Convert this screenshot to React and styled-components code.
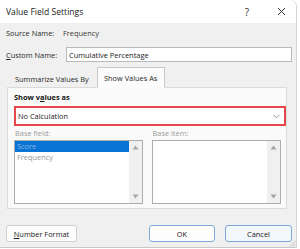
import React from "react";
import styled, { createGlobalStyle } from "styled-components";

const Global = createGlobalStyle`
  html, body { margin: 0; padding: 0; background: #ffffff; }
  body { font-family: "Open Sans", "Noto Sans", sans-serif; color: #1a1a1a; }
  * { box-sizing: border-box; }
`;

const Window = styled.div`
  width: 297px;
  height: 248px;
  background: #f0f0f0;
  border-right: 1px solid #d4d4d4;
  border-bottom: 1px solid #c8c8c8;
  border-top-right-radius: 7px;
  display: flex;
  flex-direction: column;
  overflow: hidden;
  position: relative;
`;

const TitleBar = styled.div`
  height: 23px;
  flex: none;
  background: #ffffff;
  display: flex;
  align-items: center;
  padding-left: 6px;
  font-size: 8.6px;
  color: #1a1a1a;
`;

const TitleButton = styled.span`
  width: ${(p) => p.$w}px;
  text-align: center;
  font-size: ${(p) => p.$size}px;
  color: #333;
  margin-left: ${(p) => p.$ml || 0}px;
  display: flex;
  justify-content: center;
`;

const Spacer = styled.div`
  flex: 1;
`;

const Body = styled.div`
  flex: 1;
  display: flex;
  flex-direction: column;
  padding: 0 4px 0 6px;
  font-size: 7.4px;
`;

const Row = styled.div`
  display: flex;
  align-items: center;
  height: ${(p) => p.$h}px;
  margin-top: ${(p) => p.$mt}px;
  flex: none;
`;

const Label = styled.span`
  width: ${(p) => p.$w}px;
  color: #2a2a2a;
  flex: none;
`;

const Value = styled.span`
  color: #3a3a3a;
`;

const Key = styled.span`
  text-decoration: underline;
  text-underline-offset: 1px;
`;

const TextInput = styled.div`
  flex: 1;
  height: 100%;
  background: #fff;
  border: 1px solid #b9b9b9;
  display: flex;
  align-items: center;
  padding-left: 2px;
  color: #1a1a1a;
`;

const TabStrip = styled.div`
  display: flex;
  align-items: flex-end;
  height: 20px;
  margin-top: 6px;
  padding-left: 4px;
  flex: none;
  position: relative;
  z-index: 1;
  margin-bottom: -1px;
`;

const Tab = styled.div`
  height: ${(p) => (p.$active ? 21 : 18)}px;
  padding: 0 ${(p) => (p.$active ? 6 : 4)}px;
  display: flex;
  align-items: center;
  color: #2a2a2a;
  background: ${(p) => (p.$active ? "#fbfbfb" : "transparent")};
  border: 1px solid ${(p) => (p.$active ? "#c9c9c9" : "transparent")};
  border-bottom: 1px solid ${(p) => (p.$active ? "#fbfbfb" : "transparent")};
  margin-top: ${(p) => (p.$active ? 0 : 2)}px;
  width: ${(p) => p.$w}px;
  white-space: nowrap;
`;

const Panel = styled.div`
  margin-left: 1px;
  margin-right: 5px;
  border: 1px solid #dadada;
  background: #fafafa;
  padding: 4px 5px 4px 6px;
  display: flex;
  flex-direction: column;
  flex: none;
`;

const SectionTitle = styled.div`
  font-weight: 700;
  color: #111;
  height: 10px;
  line-height: 10px;
  flex: none;
`;

const Combo = styled.div`
  margin-top: 4px;
  height: 20px;
  width: 272px;
  border: 2px solid #e5484a;
  background: #fff;
  display: flex;
  align-items: center;
  padding: 0 4px 0 2px;
  color: #1a1a1a;
  flex: none;
`;

const Lists = styled.div`
  display: flex;
  gap: 9px;
  flex: none;
`;

const ListGroup = styled.div`
  width: ${(p) => p.$w}px;
  display: flex;
  flex-direction: column;
`;

const ListLabel = styled.div`
  color: #9a9a9a;
  height: 14px;
  display: flex;
  align-items: center;
  padding-left: 1px;
`;

const ListBox = styled.div`
  height: 64px;
  border: 1px solid #adadad;
  background: #fff;
  display: flex;
`;

const Items = styled.div`
  flex: 1;
  display: flex;
  flex-direction: column;
`;

const Item = styled.div`
  height: 11px;
  line-height: 11px;
  padding-left: 2px;
  color: ${(p) => (p.$selected ? "#8ab4de" : "#9a9a9a")};
  background: ${(p) => (p.$selected ? "#0a74d6" : "transparent")};
`;

const ScrollBar = styled.div`
  width: 13px;
  background: #f0f0f0;
  display: flex;
  flex-direction: column;
  justify-content: space-between;
  align-items: center;
  padding: 4px 0;
`;

const Arrow = styled.svg`
  display: block;
`;

const Footer = styled.div`
  display: flex;
  align-items: center;
  margin-top: 16px;
  height: 17px;
  flex: none;
`;

const Button = styled.div`
  width: ${(p) => p.$w}px;
  margin-left: ${(p) => p.$ml || 0}px;
  height: 17px;
  border-radius: 3px;
  border: 1px solid ${(p) => (p.$primary ? "#7fa9d6" : "#cfcfcf")};
  background: ${(p) => (p.$tint ? "#f2f7fc" : "#fdfdfd")};
  display: flex;
  align-items: center;
  justify-content: center;
  color: #1a1a1a;
`;

const Grip = styled.svg`
  position: absolute;
  right: 0;
  bottom: 0;
`;

const UpArrow = () => (
  <Arrow width="7" height="5" viewBox="0 0 7 5">
    <path d="M3.5 0.5 L6.5 4.5 L0.5 4.5 Z" fill="#a6a6a6" />
  </Arrow>
);

const DownArrow = () => (
  <Arrow width="7" height="5" viewBox="0 0 7 5">
    <path d="M0.5 0.5 L6.5 0.5 L3.5 4.5 Z" fill="#a6a6a6" />
  </Arrow>
);

export default function App() {
  return (
    <>
      <Global />
      <Window>
        <TitleBar>
          Value Field Settings
          <Spacer />
          <TitleButton $w={20} $size={10}>?</TitleButton>
          <TitleButton $w={20} $size={12} $ml={14}>
            <svg width="9" height="9" viewBox="0 0 9 9">
              <path d="M1 1 L8 8 M8 1 L1 8" stroke="#333" strokeWidth="1" />
            </svg>
          </TitleButton>
          <Spacer style={{ flex: "none", width: 5 }} />
        </TitleBar>
        <Body>
          <Row $h={10} $mt={5}>
            <Label $w={57}>Source Name:</Label>
            <Value>Frequency</Value>
          </Row>
          <Row $h={15} $mt={9}>
            <Label $w={60}>
              <Key>C</Key>ustom Name:
            </Label>
            <TextInput>Cumulative Percentage</TextInput>
          </Row>
          <TabStrip>
            <Tab $w={87}>Summarize Values By</Tab>
            <Tab $active $w={68}>Show Values As</Tab>
          </TabStrip>
          <Panel>
            <SectionTitle>
              Show v<Key>a</Key>lues as
            </SectionTitle>
            <Combo>
              No Calculation
              <Spacer />
              <svg width="7" height="5" viewBox="0 0 7 5">
                <path d="M0.5 0.8 L3.5 3.8 L6.5 0.8" fill="none" stroke="#8a8a8a" strokeWidth="0.9" />
              </svg>
            </Combo>
            <Lists>
              <ListGroup $w={131}>
                <ListLabel>Base field:</ListLabel>
                <ListBox>
                  <Items>
                    <Item $selected>Score</Item>
                    <Item>Frequency</Item>
                  </Items>
                  <ScrollBar>
                    <UpArrow />
                    <DownArrow />
                  </ScrollBar>
                </ListBox>
              </ListGroup>
              <ListGroup $w={132}>
                <ListLabel>Base item:</ListLabel>
                <ListBox>
                  <Items />
                  <ScrollBar>
                    <UpArrow />
                    <DownArrow />
                  </ScrollBar>
                </ListBox>
              </ListGroup>
            </Lists>
          </Panel>
          <Footer>
            <Button $w={71}>
              <span>
                <Key>N</Key>umber Format
              </span>
            </Button>
            <Spacer />
            <Button $w={66} $primary>OK</Button>
            <Button $w={67} $ml={10} $primary $tint>Cancel</Button>
          </Footer>
        </Body>
        <Grip width="8" height="8" viewBox="0 0 8 8">
          <path d="M7.5 2 L2 7.5 M7.5 5 L5 7.5" stroke="#b0b0b0" strokeWidth="0.8" />
        </Grip>
      </Window>
    </>
  );
}
